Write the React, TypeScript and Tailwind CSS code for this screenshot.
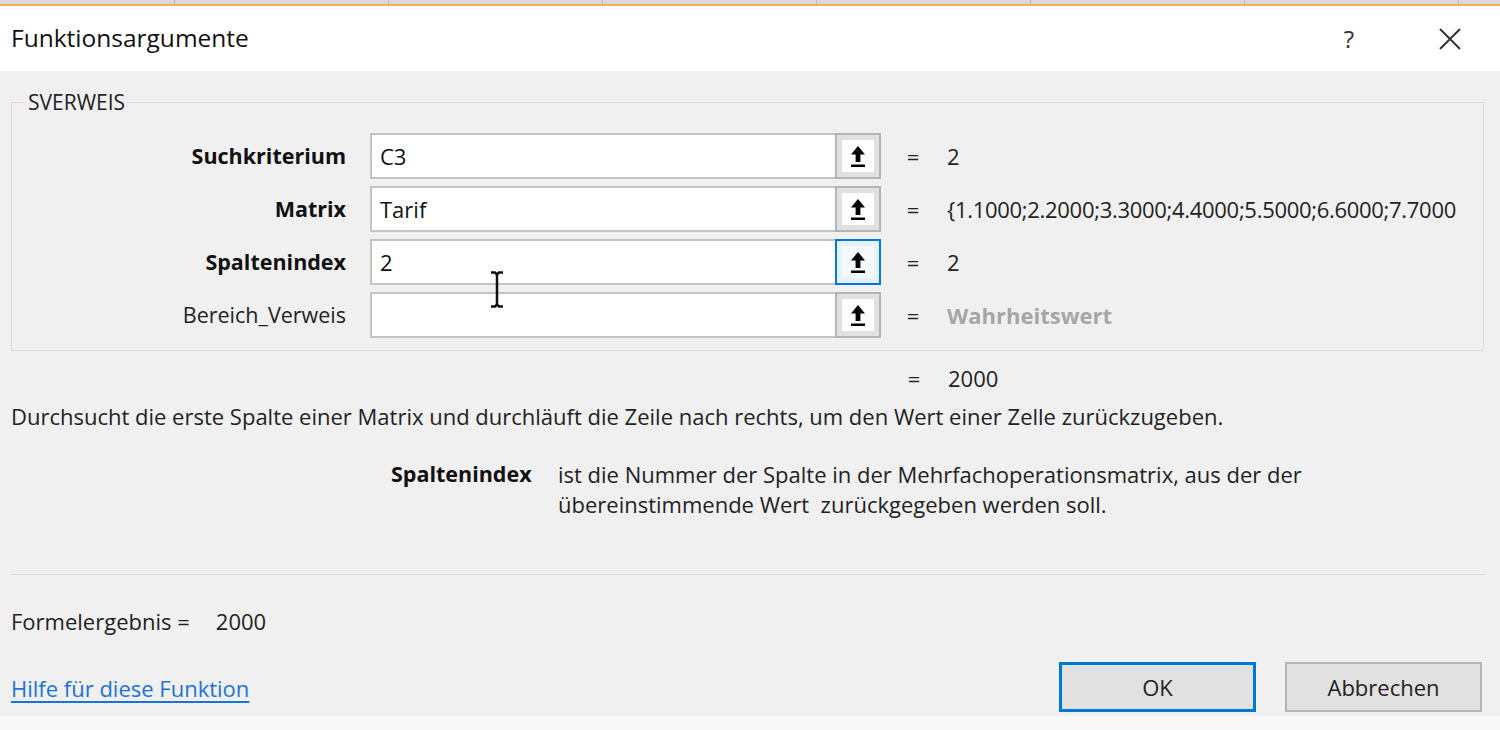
import React from 'react';

const font = { fontFamily: '"Open Sans", "Noto Sans", sans-serif' };

function RefButton({ focused }: { focused?: boolean }) {
  return (
    <div
      className={`w-[46px] h-[46px] shrink-0 flex items-center justify-center border-2 ${
        focused ? 'border-[#0078d7] bg-[#e5f1fb]' : 'border-[#b4b4b4] bg-[#e1e1e1]'
      }`}
    >
      <div className={`w-[32px] h-[32px] flex items-center justify-center ${focused ? 'bg-[#f4f9fd]' : 'bg-white'}`}>
        <svg width="18" height="25" viewBox="0 0 18 25">
          <path d="M9 2 L16 10.5 L11.4 10.5 L11.4 18 L6.6 18 L6.6 10.5 L2 10.5 Z" fill="#000" />
          <rect x="2" y="20.5" width="14" height="2.5" fill="#000" />
        </svg>
      </div>
    </div>
  );
}

const rows = [
  { label: 'Suchkriterium', bold: true, value: 'C3', result: '2' },
  { label: 'Matrix', bold: true, value: 'Tarif', result: '{1.1000;2.2000;3.3000;4.4000;5.5000;6.6000;7.7000' },
  { label: 'Spaltenindex', bold: true, value: '2', result: '2', focused: true },
  { label: 'Bereich_Verweis', bold: false, value: '', result: 'Wahrheitswert', muted: true },
];

export default function App() {
  const cells = Array.from({ length: 8 });
  return (
    <div className="relative w-[1500px] h-[730px] overflow-hidden bg-[#f0f0f0] text-[#1a1a1a] flex flex-col" style={font}>
      {/* spreadsheet strip behind the dialog */}
      <div className="h-[4px] shrink-0 bg-[#d9d9d9] flex">
        <div className="w-[175px] shrink-0 border-r border-[#b8b8b8]" />
        {cells.map((_, i) => (
          <div key={i} className="w-[214px] shrink-0 border-r border-[#b8b8b8]" />
        ))}
      </div>
      <div className="h-[2px] shrink-0 bg-[#f4ad5c]" />

      {/* title bar */}
      <div className="h-[65px] shrink-0 bg-white flex items-center pl-[11px] pr-[38px]">
        <div className="text-[24.5px] leading-none text-[#111]">Funktionsargumente</div>
        <div className="ml-auto text-[24px] leading-none text-[#333] pr-[84px]">?</div>
        <svg width="24" height="24" viewBox="0 0 24 24">
          <path d="M2 2 L22 22 M22 2 L2 22" stroke="#333" strokeWidth="2" />
        </svg>
      </div>

      <div className="pl-[11px] pr-[16px] text-[22px]">
        {/* argument group */}
        <fieldset className="mt-[19px] border border-[#dcdcdc] h-[261px] px-[1px] pb-[12px]">
          <legend className="ml-[13px] px-[2px] text-[21px] leading-[24px] text-[#222]">SVERWEIS</legend>
          <div className="flex flex-col gap-[7px] pt-[19px]">
            {rows.map((r) => (
              <div key={r.label} className="flex items-center h-[46px]">
                <div
                  className={`w-[333px] shrink-0 text-right text-[21.5px] ${
                    r.bold ? 'font-bold text-[#111]' : 'text-[#222]'
                  }`}
                >
                  {r.label}
                </div>
                <div className="ml-[24px] flex">
                  <div className="w-[465px] h-[46px] bg-white border-2 border-r-0 border-[#c4c4c4] flex items-center pl-[8px] text-[#111]">
                    {r.value}
                  </div>
                  <RefButton focused={r.focused} />
                </div>
                <div className="ml-[25px] w-[14px] text-[#222] text-center">=</div>
                <div
                  className={`ml-[27px] w-[520px] overflow-hidden whitespace-nowrap tracking-[-0.3px] ${
                    r.muted ? 'font-bold text-[#a6a6a6] text-[22px] tracking-[0px]' : 'text-[#222]'
                  }`}
                >
                  {r.result}
                </div>
              </div>
            ))}
          </div>
        </fieldset>

        {/* overall result */}
        <div className="mt-[13px] h-[28px] flex items-center text-[#222]">
          <div className="ml-[896px] w-[14px] text-center">=</div>
          <div className="ml-[27px]">2000</div>
        </div>

        <div className="mt-[10px] leading-[28px] text-[#222]">
          Durchsucht die erste Spalte einer Matrix und durchläuft die Zeile nach rechts, um den Wert einer Zelle zurückzugeben.
        </div>

        <div className="mt-[29px] flex leading-[30px] text-[#222]">
          <div className="ml-[380px] w-[167px] shrink-0 font-bold text-[#111] text-[21.5px]">Spaltenindex</div>
          <div className="w-[800px]">
            ist die Nummer der Spalte in der Mehrfachoperationsmatrix, aus der der
            <br />
            übereinstimmende Wert&nbsp; zurückgegeben werden soll.
          </div>
        </div>

        <div className="mt-[55px] h-px bg-[#dadada] mr-[-2px]" />

        <div className="mt-[32px] h-[28px] flex items-center text-[#222]">
          <span>Formelergebnis =</span>
          <span className="ml-[26px]">2000</span>
        </div>

        <div className="mt-[27px] flex items-center">
          <a href="#" className="text-[#1a73d9] underline underline-offset-[4px] mt-[3px]">
            Hilfe für diese Funktion
          </a>
          <button className="ml-auto w-[197px] h-[50px] bg-[#e1e1e1] border-[3px] border-[#0078d7] text-[#222]">
            OK
          </button>
          <button className="ml-[29px] mr-[2px] w-[197px] h-[50px] bg-[#e1e1e1] border-2 border-[#b4b4b4] text-[#222]">
            Abbrechen
          </button>
        </div>
      </div>
      <div className="mt-[4px] flex-1 bg-[#f8f8f8]" />

      {/* mouse I-beam cursor */}
      <svg className="absolute left-[489px] top-[271px]" width="16" height="37" viewBox="0 0 16 37">
        <path d="M2 1.5 H6 L8 3.5 L10 1.5 H14 M8 3.5 V33.5 M2 35.5 H6 L8 33.5 L10 35.5 H14" stroke="#111" strokeWidth="2.5" fill="none" />
      </svg>
    </div>
  );
}
